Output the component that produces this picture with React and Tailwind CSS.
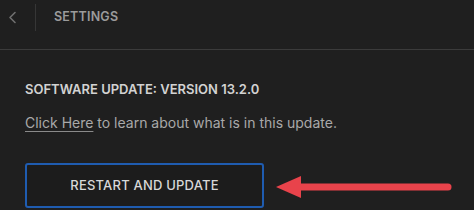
import React from 'react';

const BackChevron = () => (
  <svg width="9" height="13" viewBox="0 0 9 13" fill="none" aria-hidden="true">
    <path d="M7 1.5L2 6.5L7 11.5" stroke="#6f6f6f" strokeWidth="1.6" strokeLinecap="round" strokeLinejoin="round" />
  </svg>
);

const RedArrow = () => (
  <svg width="176" height="24" viewBox="0 0 176 24" aria-hidden="true">
    <line x1="20" y1="12" x2="172" y2="12" stroke="#e8434b" strokeWidth="7" strokeLinecap="round" />
    <polygon points="0,12 25,1 25,23" fill="#e8434b" />
  </svg>
);

export default function App() {
  return (
    <div className="w-[474px] h-[210px] bg-[#1f1f1f] overflow-hidden font-['Inter',sans-serif]">
      {/* header */}
      <div className="h-[50px] border-b border-[#3b3b3b]">
        <div className="flex items-center h-[35px]">
          <div className="ml-[8px] flex items-center">
            <BackChevron />
          </div>
          <div className="ml-[18px] w-px h-[27px] bg-[#363636]" />
          <span className="ml-[18px] text-[12.5px] font-semibold tracking-[0.2px] text-[#9b9b9b]">SETTINGS</span>
        </div>
      </div>

      {/* content */}
      <div className="pl-[25px]">
        <div className="mt-[31px] text-[13px] leading-[17px] font-semibold text-[#d2d2d2]">
          SOFTWARE UPDATE: VERSION 13.2.0
        </div>
        <p className="mt-[15px] text-[14px] leading-[20px] text-[#a9a9a9]">
          <span className="underline underline-offset-[3px] decoration-[#8a8a8a]">Click Here</span> to learn about what is in this update.
        </p>
        <div className="mt-[30px] flex items-center gap-[12px]">
          <button className="w-[239px] h-[45px] rounded-[3px] border-2 border-[#1f5cb0] bg-[#1c1c1c] text-[13px] font-medium tracking-[0.2px] text-[#d8d8d8]">
            RESTART AND UPDATE
          </button>
          <div className="mt-[3px]">
            <RedArrow />
          </div>
        </div>
      </div>
    </div>
  );
}
